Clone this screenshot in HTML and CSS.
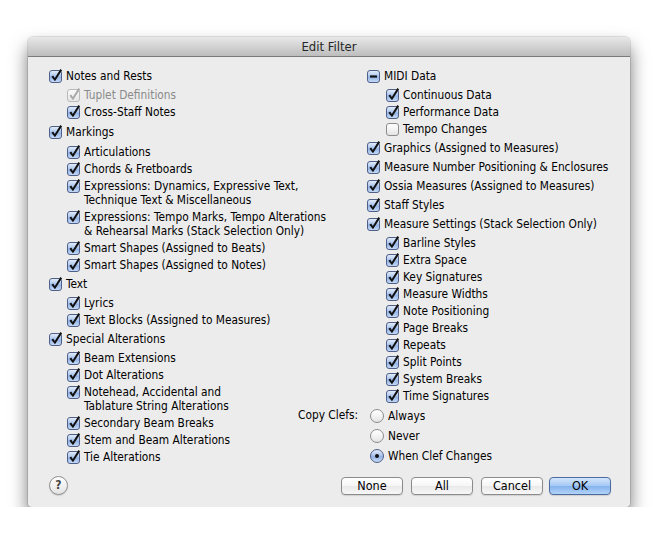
FILE: index.html
```html
<!DOCTYPE html>
<html>
<head>
<meta charset="utf-8">
<title>Edit Filter</title>
<link rel="stylesheet" href="styles.css">
</head>
<body>
<svg class="defs" aria-hidden="true">
  <defs>
    <linearGradient id="gBlue" x1="0" y1="0" x2="0" y2="1">
      <stop offset="0" stop-color="#e8f0fb"/>
      <stop offset="0.45" stop-color="#adc6ee"/>
      <stop offset="0.55" stop-color="#94b3e5"/>
      <stop offset="1" stop-color="#c9ddf7"/>
    </linearGradient>
    <linearGradient id="gWhite" x1="0" y1="0" x2="0" y2="1">
      <stop offset="0" stop-color="#ffffff"/>
      <stop offset="0.5" stop-color="#f3f3f3"/>
      <stop offset="1" stop-color="#e2e2e2"/>
    </linearGradient>
    <linearGradient id="gGray" x1="0" y1="0" x2="0" y2="1">
      <stop offset="0" stop-color="#fafafa"/>
      <stop offset="1" stop-color="#e6e6e6"/>
    </linearGradient>
    <g id="cb-on">
      <rect x="0.5" y="0.5" width="12" height="12" rx="2.5" fill="url(#gBlue)" stroke="#4f5f88"/>
      <path d="M2.4 6.7 L4.2 5.5 L5.8 8 L11.4 -1 L13.1 0.2 L6 11.2 Z" fill="#111"/>
    </g>
    <g id="cb-dis">
      <rect x="0.5" y="0.5" width="12" height="12" rx="2.5" fill="url(#gGray)" stroke="#b9b9b9"/>
      <path d="M2.4 6.7 L4.2 5.5 L5.8 8 L11.4 -1 L13.1 0.2 L6 11.2 Z" fill="#a9a9a9"/>
    </g>
    <g id="cb-off">
      <rect x="0.5" y="0.5" width="12" height="12" rx="2.5" fill="url(#gWhite)" stroke="#8c8c8c"/>
    </g>
    <g id="cb-mix">
      <rect x="0.5" y="0.5" width="12" height="12" rx="2.5" fill="url(#gBlue)" stroke="#4f5f88"/>
      <rect x="3" y="5.4" width="7" height="2.2" fill="#111"/>
    </g>
    <g id="rb-off">
      <circle cx="7" cy="7" r="6.5" fill="url(#gWhite)" stroke="#8c8c8c"/>
    </g>
    <g id="rb-on">
      <circle cx="7" cy="7" r="6.5" fill="url(#gBlue)" stroke="#4f5f88"/>
      <circle cx="7" cy="7" r="2" fill="#111"/>
    </g>
  </defs>
</svg>

<div class="window">
  <div class="titlebar">Edit Filter</div>
  <div class="body">
    <div class="columns">
      <div class="col-left">
        <div class="group">
          <div class="item parent"><svg class="box" viewBox="0 0 13 13"><use href="#cb-on"/></svg><span>Notes and Rests</span></div>
          <div class="sub">
            <div class="item disabled"><svg class="box" viewBox="0 0 13 13"><use href="#cb-dis"/></svg><span>Tuplet Definitions</span></div>
            <div class="item"><svg class="box" viewBox="0 0 13 13"><use href="#cb-on"/></svg><span>Cross-Staff Notes</span></div>
          </div>
        </div>
        <div class="group wide">
          <div class="item parent wide"><svg class="box" viewBox="0 0 13 13"><use href="#cb-on"/></svg><span>Markings</span></div>
          <div class="sub">
            <div class="item"><svg class="box" viewBox="0 0 13 13"><use href="#cb-on"/></svg><span>Articulations</span></div>
            <div class="item"><svg class="box" viewBox="0 0 13 13"><use href="#cb-on"/></svg><span>Chords &amp; Fretboards</span></div>
            <div class="item"><svg class="box" viewBox="0 0 13 13"><use href="#cb-on"/></svg><span>Expressions: Dynamics, Expressive Text,<br>Technique Text &amp; Miscellaneous</span></div>
            <div class="item"><svg class="box" viewBox="0 0 13 13"><use href="#cb-on"/></svg><span>Expressions: Tempo Marks, Tempo Alterations<br>&amp; Rehearsal Marks (Stack Selection Only)</span></div>
            <div class="item"><svg class="box" viewBox="0 0 13 13"><use href="#cb-on"/></svg><span>Smart Shapes (Assigned to Beats)</span></div>
            <div class="item"><svg class="box" viewBox="0 0 13 13"><use href="#cb-on"/></svg><span>Smart Shapes (Assigned to Notes)</span></div>
          </div>
        </div>
        <div class="group">
          <div class="item parent"><svg class="box" viewBox="0 0 13 13"><use href="#cb-on"/></svg><span>Text</span></div>
          <div class="sub">
            <div class="item"><svg class="box" viewBox="0 0 13 13"><use href="#cb-on"/></svg><span>Lyrics</span></div>
            <div class="item"><svg class="box" viewBox="0 0 13 13"><use href="#cb-on"/></svg><span>Text Blocks (Assigned to Measures)</span></div>
          </div>
        </div>
        <div class="group">
          <div class="item parent"><svg class="box" viewBox="0 0 13 13"><use href="#cb-on"/></svg><span>Special Alterations</span></div>
          <div class="sub">
            <div class="item"><svg class="box" viewBox="0 0 13 13"><use href="#cb-on"/></svg><span>Beam Extensions</span></div>
            <div class="item"><svg class="box" viewBox="0 0 13 13"><use href="#cb-on"/></svg><span>Dot Alterations</span></div>
            <div class="item"><svg class="box" viewBox="0 0 13 13"><use href="#cb-on"/></svg><span>Notehead, Accidental and<br>Tablature String Alterations</span></div>
            <div class="item"><svg class="box" viewBox="0 0 13 13"><use href="#cb-on"/></svg><span>Secondary Beam Breaks</span></div>
            <div class="item"><svg class="box" viewBox="0 0 13 13"><use href="#cb-on"/></svg><span>Stem and Beam Alterations</span></div>
            <div class="item"><svg class="box" viewBox="0 0 13 13"><use href="#cb-on"/></svg><span>Tie Alterations</span></div>
          </div>
        </div>
      </div>

      <div class="col-right">
        <div class="list-right">
          <div class="group">
            <div class="item parent"><svg class="box" viewBox="0 0 13 13"><use href="#cb-mix"/></svg><span>MIDI Data</span></div>
            <div class="sub sub-right">
              <div class="item"><svg class="box" viewBox="0 0 13 13"><use href="#cb-on"/></svg><span>Continuous Data</span></div>
              <div class="item"><svg class="box" viewBox="0 0 13 13"><use href="#cb-on"/></svg><span>Performance Data</span></div>
              <div class="item"><svg class="box" viewBox="0 0 13 13"><use href="#cb-off"/></svg><span>Tempo Changes</span></div>
            </div>
          </div>
          <div class="group"><div class="item"><svg class="box" viewBox="0 0 13 13"><use href="#cb-on"/></svg><span>Graphics (Assigned to Measures)</span></div></div>
          <div class="group"><div class="item"><svg class="box" viewBox="0 0 13 13"><use href="#cb-on"/></svg><span>Measure Number Positioning &amp; Enclosures</span></div></div>
          <div class="group"><div class="item"><svg class="box" viewBox="0 0 13 13"><use href="#cb-on"/></svg><span>Ossia Measures (Assigned to Measures)</span></div></div>
          <div class="group"><div class="item"><svg class="box" viewBox="0 0 13 13"><use href="#cb-on"/></svg><span>Staff Styles</span></div></div>
          <div class="group">
            <div class="item parent"><svg class="box" viewBox="0 0 13 13"><use href="#cb-on"/></svg><span>Measure Settings (Stack Selection Only)</span></div>
            <div class="sub sub-right">
              <div class="item"><svg class="box" viewBox="0 0 13 13"><use href="#cb-on"/></svg><span>Barline Styles</span></div>
              <div class="item"><svg class="box" viewBox="0 0 13 13"><use href="#cb-on"/></svg><span>Extra Space</span></div>
              <div class="item"><svg class="box" viewBox="0 0 13 13"><use href="#cb-on"/></svg><span>Key Signatures</span></div>
              <div class="item"><svg class="box" viewBox="0 0 13 13"><use href="#cb-on"/></svg><span>Measure Widths</span></div>
              <div class="item"><svg class="box" viewBox="0 0 13 13"><use href="#cb-on"/></svg><span>Note Positioning</span></div>
              <div class="item"><svg class="box" viewBox="0 0 13 13"><use href="#cb-on"/></svg><span>Page Breaks</span></div>
              <div class="item"><svg class="box" viewBox="0 0 13 13"><use href="#cb-on"/></svg><span>Repeats</span></div>
              <div class="item"><svg class="box" viewBox="0 0 13 13"><use href="#cb-on"/></svg><span>Split Points</span></div>
              <div class="item"><svg class="box" viewBox="0 0 13 13"><use href="#cb-on"/></svg><span>System Breaks</span></div>
              <div class="item"><svg class="box" viewBox="0 0 13 13"><use href="#cb-on"/></svg><span>Time Signatures</span></div>
            </div>
          </div>
        </div>
        <div class="clefs">
          <div class="clefs-label">Copy Clefs:</div>
          <div class="radios">
            <div class="item radio"><svg class="rbox" viewBox="0 0 14 14"><use href="#rb-off"/></svg><span>Always</span></div>
            <div class="item radio"><svg class="rbox" viewBox="0 0 14 14"><use href="#rb-off"/></svg><span>Never</span></div>
            <div class="item radio"><svg class="rbox" viewBox="0 0 14 14"><use href="#rb-on"/></svg><span>When Clef Changes</span></div>
          </div>
        </div>
      </div>
    </div>

    <div class="footer">
      <div class="help">?</div>
      <div class="buttons">
        <div class="btn">None</div>
        <div class="btn">All</div>
        <div class="btn">Cancel</div>
        <div class="btn default">OK</div>
      </div>
    </div>
  </div>
</div>
</body>
</html>
```

FILE: styles.css
```css
* { box-sizing: border-box; }

body {
  margin: 0;
  background: #ffffff;
  font-family: "DejaVu Sans Condensed", "DejaVu Sans", sans-serif;
  font-size: 11.8px;
  color: #000;
}

.defs {
  position: absolute;
  width: 0;
  height: 0;
  overflow: hidden;
}

.window {
  margin: 37px 0 0 28px;
  width: 602px;
  height: 470px;
  background: #ececec;
  border-radius: 5px 5px 4px 4px;
  box-shadow: 0 0 0 1px rgba(0, 0, 0, 0.10), 0 10px 18px rgba(0, 0, 0, 0.55);
  display: flex;
  flex-direction: column;
  overflow: hidden;
}

.titlebar {
  height: 20px;
  line-height: 19px;
  text-align: center;
  font-size: 13px;
  color: #262626;
  background: linear-gradient(#e8e8e8, #bdbdbd);
  border-bottom: 1px solid #7a7a7a;
}

.body {
  flex: 1;
  display: flex;
  flex-direction: column;
  padding: 10px 19px 12px 21px;
}

.columns {
  display: flex;
}

.col-left {
  width: 249px;
  flex: none;
}

.col-right {
  flex: 1;
}

.list-right {
  padding-left: 69px;
}

.group + .group {
  margin-top: 2px;
}

.group.wide {
  margin-top: 3px;
}

.item {
  display: flex;
  align-items: flex-start;
  padding: 2px 0 1px;
  line-height: 14px;
  white-space: nowrap;
}

.item.parent {
  margin-bottom: 2px;
}

.item.parent.wide {
  margin-bottom: 3px;
}

.item.disabled {
  color: #8a8a8a;
}

.box {
  width: 13px;
  height: 13px;
  flex: none;
  margin: 1px 4px 0 0;
  overflow: visible;
}

.rbox {
  width: 14px;
  height: 14px;
  flex: none;
  margin: 0 4px 0 0;
  overflow: visible;
}

.sub {
  padding-left: 18px;
}

.sub-right {
  padding-left: 19px;
}

.clefs {
  display: flex;
  margin-top: 3px;
}

.clefs-label {
  width: 71px;
  flex: none;
  padding-top: 1px;
  line-height: 14px;
}

.radios {
  display: flex;
  flex-direction: column;
  gap: 3px;
}

.item.radio {
  padding-left: 1px;
}

.footer {
  margin-top: auto;
  display: flex;
  align-items: center;
}

.help {
  width: 19px;
  height: 19px;
  border-radius: 50%;
  border: 1px solid #8e8e8e;
  background: linear-gradient(#ffffff, #e3e3e3);
  box-shadow: 0 1px 1px rgba(0, 0, 0, 0.15);
  text-align: center;
  line-height: 17px;
  font-size: 12px;
  font-weight: bold;
  color: #444;
}

.buttons {
  margin-left: auto;
  display: flex;
  gap: 8px;
}

.btn {
  width: 62px;
  height: 18px;
  border: 1px solid #8b8b8b;
  border-radius: 4px;
  background: linear-gradient(#ffffff 0%, #f6f6f6 50%, #e9e9e9 51%, #f7f7f7 100%);
  box-shadow: 0 1px 1px rgba(0, 0, 0, 0.12);
  text-align: center;
  line-height: 16px;
  font-size: 12.5px;
}

.btn.default {
  margin-left: -2px;
  border-color: #4d6a9f;
  background: linear-gradient(#d3e6fc 0%, #a3c8f4 50%, #84b2ee 51%, #b2d3f8 100%);
}
```
